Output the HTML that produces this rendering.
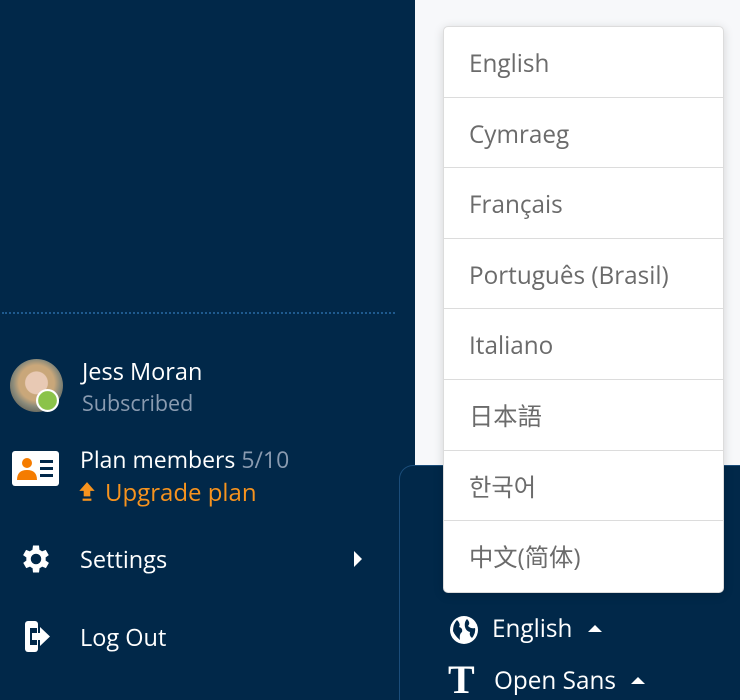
<!DOCTYPE html>
<html><head><meta charset="utf-8"><style>
*{margin:0;padding:0;box-sizing:border-box}
html,body{width:740px;height:700px;overflow:hidden}
body{background:#f7f8fa;font-family:"Open Sans","Liberation Sans","Noto Sans CJK SC",sans-serif;position:relative}
.left{position:absolute;left:0;top:0;width:415px;height:700px;background:#012849}
.dots{position:absolute;left:2px;top:312px;width:393px;border-top:2px dotted #1e5a8e}
.t{position:absolute;color:#fff;font-size:23.5px;white-space:nowrap}
.panel{position:absolute;left:399px;top:465px;width:341px;height:235px;background:#012849;border:1px solid #1b4d7a;border-right:none;border-bottom:none;border-radius:14px 0 0 0}
.dd{position:absolute;left:443px;top:26px;width:281px;height:567px;background:#fff;border:1px solid #dcdcdc;border-radius:5px;box-shadow:0 2px 10px rgba(0,0,0,.15)}
.row{height:70.6px;border-bottom:1px solid #dcdcdc;color:#6b6b6b;font-size:24.3px;padding-left:25px;line-height:73px}
.row:last-child{border-bottom:none}
</style></head><body>
<div class="left">
<div class="dots"></div>
<div style="position:absolute;left:10px;top:359px;width:53px;height:53px;border-radius:50%;background:radial-gradient(circle at 50% 45%,#e8c9b4 0 28%,#c9a77a 30% 45%,#8a8a7a 60%,#3a3a36 100%)"></div>
<div style="position:absolute;left:36px;top:389px;width:32px;height:32px;border-radius:50%;background:#8bc34a;border:3px solid #fff;transform:scale(.72);transform-origin:0 0"></div>
<div class="t" style="left:82px;top:355px">Jess Moran</div>
<div class="t" style="left:82px;top:389px;color:#8a9bb0;font-size:21.5px">Subscribed</div>
<svg style="position:absolute;left:12px;top:451px" width="47" height="35" viewBox="0 0 47 35"><rect width="47" height="35" rx="3" fill="#fff"/><circle cx="15" cy="12" r="5" fill="#f57c00"/><path d="M5 29 Q5 19 15 19 Q25 19 25 29Z" fill="#f57c00"/><rect x="28" y="9" width="13" height="3" fill="#012849"/><rect x="28" y="16" width="13" height="3" fill="#012849"/><rect x="28" y="23" width="13" height="3" fill="#012849"/></svg>
<div class="t" style="left:80px;top:443px;font-size:23px">Plan members <span style="color:#8a9bb0">5/10</span></div>
<svg style="position:absolute;left:78px;top:481px" width="18" height="22" viewBox="0 0 16 20"><path d="M8 1 L15 9 H11 V14 H5 V9 H1Z" fill="#f7931e"/><rect x="4" y="16" width="8" height="2" fill="#f7931e"/></svg>
<div class="t" style="left:105px;top:476px;color:#f7931e;font-size:24px">Upgrade plan</div>
<svg style="position:absolute;left:18px;top:541px" width="36" height="36" viewBox="0 0 24 24"><path fill="#fff" d="M19.4 13a7.5 7.5 0 000-2l2.1-1.6-2-3.5-2.5 1a7 7 0 00-1.7-1L15 3h-4l-.4 2.9a7 7 0 00-1.7 1l-2.5-1-2 3.5L6.6 11a7.5 7.5 0 000 2l-2.1 1.6 2 3.5 2.5-1a7 7 0 001.7 1L11 21h4l.4-2.9a7 7 0 001.7-1l2.5 1 2-3.5zM13 15.5a3.5 3.5 0 110-7 3.5 3.5 0 010 7z" transform="translate(-1 0)"/></svg>
<div class="t" style="left:80px;top:543px">Settings</div>
<svg style="position:absolute;left:353px;top:550px" width="10" height="18"><path d="M1 1 L9 9 L1 17Z" fill="#fff"/></svg>
<svg style="position:absolute;left:24px;top:620px" width="27" height="33" viewBox="0 0 27 33"><rect x="1" y="1" width="13" height="31" rx="3" fill="#fff"/><rect x="6" y="8" width="7" height="17" fill="#012849"/><path d="M8 13 H16 V7 L26 16.5 L16 26 V20 H8Z" fill="#fff"/></svg>
<div class="t" style="left:80px;top:621px">Log Out</div>
</div>
<div class="panel"></div>
<svg style="position:absolute;left:449px;top:615px" width="30" height="30" viewBox="0 0 30 30"><circle cx="15" cy="15" r="14" fill="#fff"/><path d="M8 5 Q12 9 10 12 Q14 13 13 17 Q10 19 11 25 Q6 21 4 16 Q4 9 8 5Z M18 4 Q22 8 19 11 Q22 14 26 13 Q27 18 23 23 Q20 21 21 17 Q17 16 16 12 Q15 7 18 4Z" fill="#012849"/></svg>
<div class="t" style="left:492px;top:612px;font-size:24.3px">English</div>
<svg style="position:absolute;left:587px;top:623px" width="16" height="10"><path d="M1 9 L8 2 L15 9Z" fill="#fff"/></svg>
<div class="t" style="left:448px;top:657px;font-family:'Liberation Serif',serif;font-size:40px;font-weight:bold;line-height:46px">T</div>
<div class="t" style="left:494px;top:664px;font-size:24.3px">Open Sans</div>
<svg style="position:absolute;left:630px;top:675px" width="16" height="10"><path d="M1 9 L8 2 L15 9Z" fill="#fff"/></svg>
<div class="dd">
<div class="row">English</div>
<div class="row">Cymraeg</div>
<div class="row">Français</div>
<div class="row">Português (Brasil)</div>
<div class="row">Italiano</div>
<div class="row">日本語</div>
<div class="row">한국어</div>
<div class="row">中文(简体)</div>
</div>
</body></html>
